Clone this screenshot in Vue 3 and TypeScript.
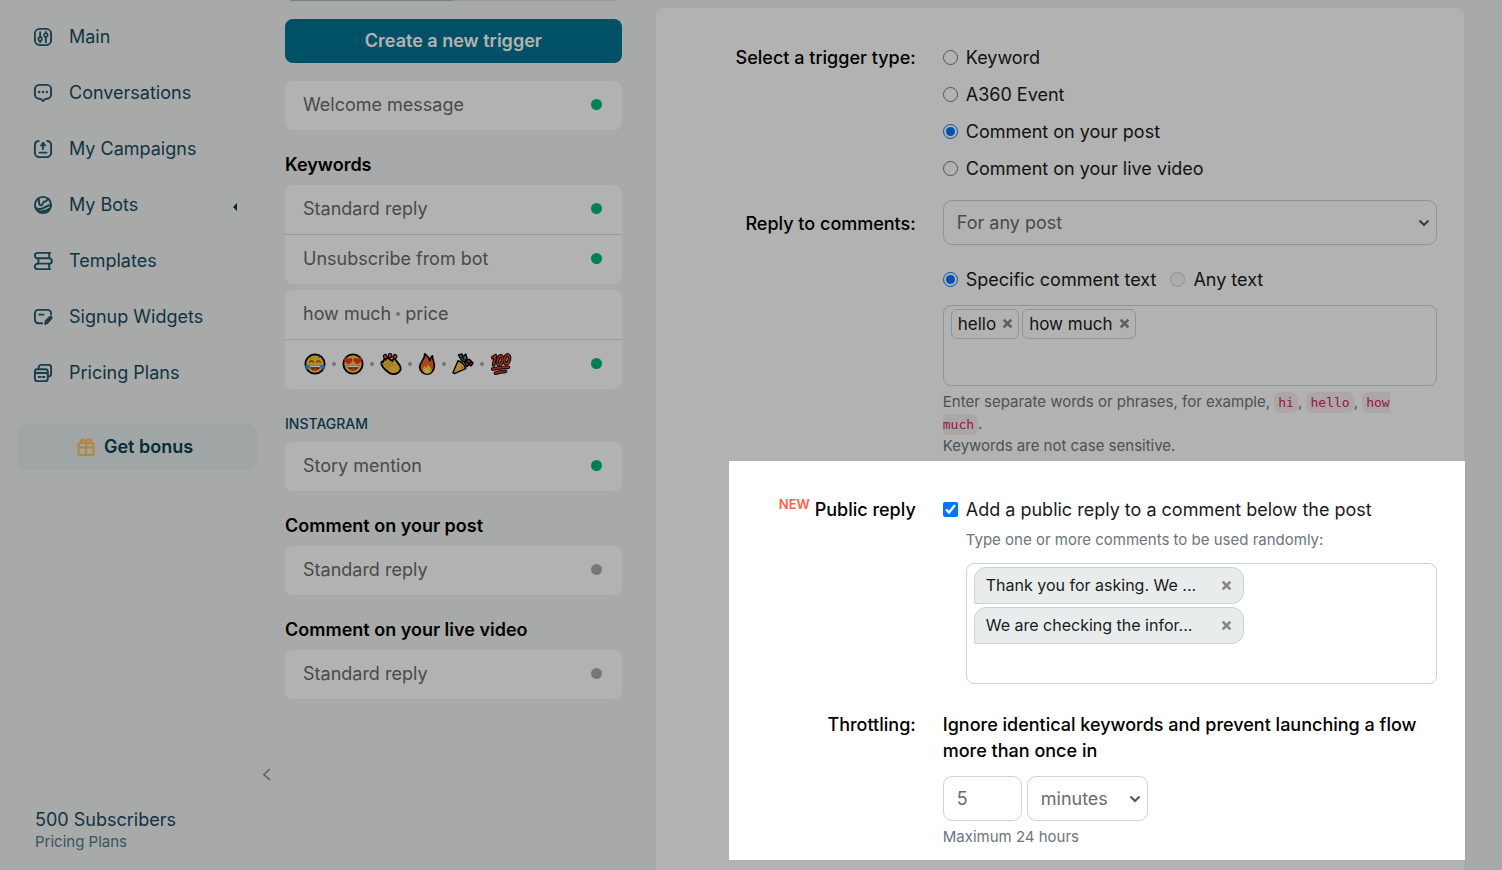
<script setup lang="ts">
import { ref } from 'vue'

interface Entry {
  words?: string[]
  emoji?: string[]
  status?: 'on' | 'off'
}

interface Group {
  title?: string
  caps?: boolean
  cards: Entry[][]
}

const nav = [
  { icon: 'main', label: 'Main' },
  { icon: 'chat', label: 'Conversations' },
  { icon: 'campaign', label: 'My Campaigns' },
  { icon: 'bots', label: 'My Bots', caret: true },
  { icon: 'templates', label: 'Templates' },
  { icon: 'widgets', label: 'Signup Widgets' },
  { icon: 'pricing', label: 'Pricing Plans' },
]

const groups: Group[] = [
  { cards: [[{ words: ['Welcome message'], status: 'on' }]] },
  {
    title: 'Keywords',
    cards: [
      [
        { words: ['Standard reply'], status: 'on' },
        { words: ['Unsubscribe from bot'], status: 'on' },
      ],
      [
        { words: ['how much', 'price'] },
        { emoji: ['joy', 'love', 'clap', 'fire', 'party', 'hundred'], status: 'on' },
      ],
    ],
  },
  { title: 'INSTAGRAM', caps: true, cards: [[{ words: ['Story mention'], status: 'on' }]] },
  { title: 'Comment on your post', cards: [[{ words: ['Standard reply'], status: 'off' }]] },
  { title: 'Comment on your live video', cards: [[{ words: ['Standard reply'], status: 'off' }]] },
]

const triggerTypes = ['Keyword', 'A360 Event', 'Comment on your post', 'Comment on your live video']
const triggerType = ref('Comment on your post')
const scope = ref('specific')
const keywords = ref(['hello', 'how much'])
const replies = ref(['Thank you for asking. We ...', 'We are checking the infor...'])
const publicReply = ref(true)
const interval = ref('5')
</script>

<template>
  <div class="page">
    <aside class="sidebar">
      <nav class="nav">
        <a v-for="item in nav" :key="item.label" href="#" class="nav-item">
          <svg class="nav-icon" viewBox="-0.5 -0.5 21 21" aria-hidden="true">
            <g v-if="item.icon === 'main'">
              <rect x="1.5" y="1.5" width="17" height="17" rx="5" />
              <path d="M7 5v5M7 14.2v1.3M13 4.6v1.2M13 10v5.4" />
              <circle cx="7" cy="12" r="1.9" />
              <circle cx="13" cy="8" r="1.9" />
            </g>
            <g v-else-if="item.icon === 'chat'">
              <path d="M6 1.5h8a4.5 4.5 0 0 1 4.5 4.5v5.5a4.5 4.5 0 0 1-4.3 4.5L12 16.4 10 18.5l-2-2.1-2.2-.4a4.5 4.5 0 0 1-4.3-4.5V6A4.5 4.5 0 0 1 6 1.5z" />
              <path class="thick" d="M6 9h.01M10 9h.01M14 9h.01" />
            </g>
            <g v-else-if="item.icon === 'campaign'">
              <path d="M5.5 1.6A4.5 4.5 0 0 0 1.5 6v8A4.5 4.5 0 0 0 6 18.5h8a4.5 4.5 0 0 0 4.5-4.5V6a4.5 4.5 0 0 0-4-4.4" />
              <path d="M10 10V4M6.2 13.8h7.6" />
              <path class="solid" d="M10 3L7.2 6.5h5.6z" />
            </g>
            <g v-else-if="item.icon === 'bots'">
              <circle class="ring" cx="10" cy="10" r="8.5" />
              <path d="M5.5 3.2L6 8.5c.2 2 2.5 2.6 3.3.8L10.500 7c.5-1 2-.3 2.700-1L15.500 3.500" />
              <path d="M1.8 12.5c2.500 2 6.500 1.800 9 .5 2.500-1.300 4.500-2.500 7.500-3M4.500 16.300c3.500.8 8 .3 12.500-2.500" />
            </g>
            <g v-else-if="item.icon === 'templates'">
              <path d="M17.500 1.500H4.300a2.800 2.800 0 0 0 0 5.600H17.500M16.500 1.500v5.600M4 7.200h12.500a2.800 2.800 0 0 1 0 5.600H4M4.500 7.200c1 1.800 1 3.800 0 5.600M17.500 18.500H4.300a2.800 2.800 0 0 1 0-5.700H17.500M16.500 12.800v5.700" />
            </g>
            <g v-else-if="item.icon === 'widgets'">
              <path d="M9 16.500H5A3.500 3.500 0 0 1 1.500 13V6A3.500 3.500 0 0 1 5 2.500h10A3.500 3.500 0 0 1 18.500 6v1.500M6 7.500h4.500" />
              <path d="M12.300 17.300l.5-3 4.300-4.300c1-1 2.500.5 1.500 1.600l-4.200 4.900z" />
              <path d="M13.500 14.800l3.500-3" />
            </g>
            <g v-else>
              <path d="M5.500 5.500V4A2.500 2.500 0 0 1 8 1.500h8A2.500 2.500 0 0 1 18.500 4v7a2.500 2.500 0 0 1-2.500 2.500h-.8" />
              <rect x="1.5" y="6" width="13.5" height="12.5" rx="2.5" />
              <path d="M1.500 10H15M5.500 14.200h2M9.800 14.200h1.700" />
            </g>
          </svg>
          <span>{{ item.label }}</span>
          <svg v-if="item.caret" class="caret" viewBox="0 0 4 8" aria-hidden="true"><path d="M4 0v8L0 4z" /></svg>
        </a>
      </nav>
      <button type="button" class="bonus">
        <svg viewBox="0 0 18 18" aria-hidden="true">
          <rect x="1.5" y="5" width="15" height="12" rx="1.5" />
          <path d="M1.500 9.500h15M9 5v12" />
          <path d="M9 5H4.500C3.300 5 3.200 1.500 5.700 1.500 7.700 1.500 9 3.200 9 5zM9 5h4.500c1.200 0 1.300-3.500-1.200-3.500C10.300 1.500 9 3.200 9 5z" />
        </svg>
        Get bonus
      </button>
      <div class="side-foot">
        <button type="button" class="collapse" aria-label="Collapse menu">
          <svg viewBox="0 0 8 12" aria-hidden="true"><path d="M7 1L1.500 6 7 11" /></svg>
        </button>
        <div class="subs">500 Subscribers</div>
        <a href="#" class="plan">Pricing Plans</a>
      </div>
    </aside>

    <main class="content">
      <section class="triggers">
        <div class="tab-line"></div>
        <button type="button" class="create">Create a new trigger</button>
        <div v-for="(group, g) in groups" :key="g" class="group">
          <h2 v-if="group.title" :class="['group-title', { caps: group.caps }]">{{ group.title }}</h2>
          <ul v-for="(card, c) in group.cards" :key="c" class="card">
            <li v-for="(entry, e) in card" :key="e" class="entry">
              <span v-if="entry.words" class="items">
                <template v-for="(word, i) in entry.words" :key="word">
                  <i v-if="i > 0" class="sep"></i>
                  <span>{{ word }}</span>
                </template>
              </span>
              <span v-else class="items">
                <template v-for="(name, i) in entry.emoji" :key="name">
                  <i v-if="i > 0" class="sep"></i>
                  <svg :class="['emoji', name]" :viewBox="name === 'fire' ? '2 0 20 24' : '0 0 24 24'" aria-hidden="true">
                    <g v-if="name === 'joy' || name === 'love'">
                      <circle cx="12" cy="12" r="10.5" fill="#ffc83d" stroke="#000" stroke-width="2" />
                      <path d="M6 13h12c0 8-12 8-12 0z" fill="#6d2632" />
                      <path d="M6.500 13.500h11v2h-11z" fill="#fff" />
                      <path d="M8.500 18c2-2 5-2 7 0-2 1.500-5 1.500-7 0z" fill="#f04a46" />
                      <template v-if="name === 'joy'">
                        <path d="M6 10.500c1-2.500 3.500-2.500 4.500 0M13.500 10.500c1-2.500 3.500-2.500 4.500 0" fill="none" stroke="#6d4a16" stroke-width="1.4" />
                        <path d="M6 5.500l2.500-.8M18 5.500l-2.500-.8" stroke="#d68b23" stroke-width="1.2" />
                        <path d="M2 12.500l4.500 1c0 5-4.500 5.500-5 2.500zM22 12.500l-4.500 1c0 5 4.500 5.500 5 2.500z" fill="#2aa5e8" />
                      </template>
                      <template v-else>
                        <path d="M7 12.500C1 9 1.500 4.500 4.500 4.500c1.500 0 2.400 1 2.500 2 .8-1.500 5-2 4.500 1.500-.3 1.500-2 3.500-4.500 4.500zM17 12.500c6-3.500 5.500-8 2.500-8-1.500 0-2.400 1-2.500 2-.8-1.500-5-2-4.500 1.500.3 1.500 2 3.500 4.500 4.500z" fill="#f23c31" />
                      </template>
                    </g>
                    <g v-else-if="name === 'clap'" stroke-linejoin="round" stroke-linecap="round">
                      <path d="M6 4.500L5.500 3.500M11 3.500V2.500M16 4.500l.5-1" fill="none" stroke="#000" stroke-width="5" />
                      <path d="M1.500 11.500c-.3-1.800 1.200-2.500 2.200-2-.4-1.800 1.200-3 2.600-2.200 0-1.600 1.700-2.400 3-1.400l4.500 2.900c-.3-2.400 2-3.200 3.400-1.200l4.300 5.900c2 3.500.8 7-2.500 8.500-3.500 1.700-7 1-9.500-.8-3.500-2.600-7.600-6.500-8-9.700z" fill="#ffc83d" stroke="#000" stroke-width="2" />
                      <path d="M6 4.500L5.500 3.500M11 3.500V2.500M16 4.500l.5-1" fill="none" stroke="#f04a28" stroke-width="2.6" />
                      <path d="M4.500 11.500l5 5M7 9.500l5 5M10 8.500l4 4" fill="none" stroke="#b87a20" />
                    </g>
                    <g v-else-if="name === 'fire'">
                      <path d="M9.500 1c3 2 5 4.500 5.500 7.500 1-1.500.5-4 3-5.500-.5 4 2.500 6 2 12-.4 5-4 8-8 8s-8-3-8-8 6-8 5.500-14z" fill="#f8612d" stroke="#000" stroke-width="1.8" stroke-linejoin="round" />
                      <path d="M9 14c1 .5 1.500 1.500 1.500 2.500 1-.8 1.500-2.500 3-4 .3 2 3.500 3.500 3.500 6.500 0 2-2 3.500-4.500 3.500S7.500 21 7.500 18.500 9 16 9 14z" fill="#ffd92f" />
                      <path d="M11.500 17l2 3.500-3 1.500z" fill="#fff" />
                    </g>
                    <g v-else-if="name === 'party'" stroke="#000" stroke-width="1.5" stroke-linejoin="round">
                      <path d="M7 2l4-1 1 3 3-3 1.500 5-3 4-3-2zM10.500 4l3 3" fill="#2a91b8" />
                      <path d="M14 11c2-4 5-5 6-3l3 3-2 3-3-1-2 2z" fill="#b92b22" />
                      <path d="M6.500 8.500c4 1 7 4 8.500 8.500L2.500 22.500 1 21.500z" fill="#ffc83d" />
                      <path d="M10 15.500h1.500v1.500" fill="none" stroke="#2aa5e8" stroke-width="1.2" />
                      <path d="M16 10l3 1.500 2-1.500" fill="none" />
                    </g>
                    <g v-else fill="none" stroke-linecap="round" stroke-linejoin="round">
                      <g stroke="#000" stroke-width="4">
                        <path d="M3 5l3-2-2 10" />
                        <ellipse cx="11" cy="8" rx="2.6" ry="5" transform="rotate(12 11 8)" />
                        <ellipse cx="18.5" cy="7" rx="2.6" ry="5" transform="rotate(12 18.5 7)" />
                        <path d="M3 17.500c6-1 11-2 17-2M6 22c4-1.500 7-2 11-2" />
                      </g>
                      <g stroke="#e03c20" stroke-width="1.9">
                        <path d="M3 5l3-2-2 10" />
                        <ellipse cx="11" cy="8" rx="2.6" ry="5" transform="rotate(12 11 8)" />
                        <ellipse cx="18.5" cy="7" rx="2.6" ry="5" transform="rotate(12 18.5 7)" />
                        <path d="M3 17.500c6-1 11-2 17-2M6 22c4-1.500 7-2 11-2" />
                      </g>
                    </g>
                  </svg>
                </template>
              </span>
              <span v-if="entry.status" :class="['dot', entry.status]"></span>
            </li>
          </ul>
        </div>
      </section>

      <form class="panel" @submit.prevent>
        <div class="row">
          <div class="label" id="type-label">Select a trigger type:</div>
          <div class="options" role="radiogroup" aria-labelledby="type-label">
            <label v-for="type in triggerTypes" :key="type" class="choice">
              <input v-model="triggerType" type="radio" name="type" :value="type" />{{ type }}
            </label>
          </div>
        </div>

        <div class="row reply-row">
          <label class="label select-label" for="post">Reply to comments:</label>
          <div>
            <select id="post" class="control wide"><option>For any post</option></select>
            <div class="scope">
              <label class="choice"><input v-model="scope" type="radio" name="scope" value="specific" />Specific comment text</label>
              <label class="choice"><input v-model="scope" type="radio" name="scope" value="any" disabled />Any text</label>
            </div>
            <div class="tagbox">
              <span v-for="(word, i) in keywords" :key="word" class="tag">
                {{ word }}
                <button type="button" class="remove" :aria-label="`Remove ${word}`" @click="keywords.splice(i, 1)">
                  <svg viewBox="0 0 10 10" aria-hidden="true"><path d="M1.500 1.500l7 7M8.500 1.500l-7 7" /></svg>
                </button>
              </span>
              <input class="entry-input" type="text" aria-label="Comment text" />
            </div>
            <p class="hint">
              Enter separate words or phrases, for example, <code>hi</code>, <code>hello</code>, <code>how much</code>.<br />Keywords are not case sensitive.
            </p>
          </div>
        </div>

        <div class="spotlight">
          <div class="row">
            <div class="label"><sup class="new">NEW</sup> Public reply</div>
            <div>
              <label class="choice"><input v-model="publicReply" type="checkbox" />Add a public reply to a comment below the post</label>
              <div class="indent">
                <label class="hint" for="reply-input">Type one or more comments to be used randomly:</label>
                <div class="tagbox replies">
                  <span v-for="(reply, i) in replies" :key="reply" class="bubble">
                    {{ reply }}
                    <button type="button" class="remove" aria-label="Remove reply" @click="replies.splice(i, 1)">
                      <svg viewBox="0 0 10 10" aria-hidden="true"><path d="M1.500 1.500l7 7M8.500 1.500l-7 7" /></svg>
                    </button>
                  </span>
                  <input id="reply-input" class="entry-input" type="text" />
                </div>
              </div>
            </div>
          </div>
          <div class="row throttle">
            <div class="label">Throttling:</div>
            <div>
              <label class="strong" for="interval">Ignore identical keywords and prevent launching a flow more than once in</label>
              <div class="interval">
                <input id="interval" v-model="interval" class="control number" type="text" />
                <select class="control unit" aria-label="Unit"><option>minutes</option></select>
              </div>
              <div class="hint">Maximum 24 hours</div>
            </div>
          </div>
        </div>
      </form>
    </main>
  </div>
</template>

<style>
body {
  margin: 0;
  background: #f1f4f3;
}
</style>

<style scoped>
.page {
  display: grid;
  grid-template-columns: 285px 1fr;
  height: 100vh;
  overflow: hidden;
  background: #f1f4f3;
  color: #1a1a1a;
  font: 400 18px/26px Inter, 'Liberation Sans', sans-serif;
}
.page *,
.page {
  box-sizing: border-box;
}
button,
input,
select {
  font: inherit;
}
a {
  text-decoration: none;
}
.sidebar {
  display: flex;
  flex-direction: column;
  padding: 9px 0 19px;
  color: #174a5e;
}
.nav-item {
  display: flex;
  align-items: center;
  height: 56px;
  padding: 0 48px 0 33px;
  gap: 16px;
  color: inherit;
}
.nav-icon {
  width: 20px;
  height: 20px;
  fill: none;
  stroke: #24586b;
  stroke-width: 2;
  stroke-linecap: round;
  stroke-linejoin: round;
}
.nav-icon circle {
  stroke-width: 1.7;
}
.nav-icon .ring {
  stroke-width: 2;
}
.nav-icon .thick {
  stroke-width: 2.6;
}
.nav-icon .solid {
  fill: #24586b;
  stroke-width: 1;
}
.caret {
  width: 4px;
  height: 8px;
  margin: 4px 0 0 auto;
  fill: #003d52;
}
.bonus {
  display: flex;
  align-items: center;
  justify-content: center;
  gap: 9px;
  height: 46px;
  margin: 23px 28px 0 17px;
  padding: 0 4px 1px 0;
  border: 0;
  border-radius: 9px;
  background: #e5eded;
  color: #073f52;
  font-weight: 600;
}
.bonus svg {
  width: 18px;
  height: 18px;
  fill: none;
  stroke: #ffbf61;
  stroke-width: 2;
  stroke-linejoin: round;
}
.side-foot {
  display: flex;
  flex-direction: column;
  margin-top: auto;
  padding-left: 35px;
}
.collapse {
  align-self: flex-end;
  display: flex;
  margin: 0 14px 26px 0;
  padding: 0;
  border: 0;
  background: none;
}
.collapse svg {
  width: 9px;
  height: 13px;
  fill: none;
  stroke: #888;
  stroke-width: 1.4;
}
.plan {
  color: #52788a;
  font-size: 15px;
  line-height: 18px;
}
.content {
  display: grid;
  grid-template-columns: 5fr 12fr;
  gap: 34px;
  padding-right: 38px;
}
.tab-line {
  height: 1px;
  margin: 0 5px 18px;
  background: linear-gradient(to right, #a9bbc4 50%, #d9dedf 50%);
}
.create {
  width: 100%;
  height: 44px;
  padding: 0;
  border: 0;
  border-radius: 8px;
  background: #007491;
  color: #fff;
  font-weight: 600;
}
.group {
  margin-top: 18px;
}
.group-title {
  margin: 0;
  padding: 4px 0 7px;
  color: #000;
  font-size: 18px;
  font-weight: 600;
  line-height: 26px;
}
.group-title.caps {
  padding: 4px 0 5px;
  color: #0d4b60;
  font-size: 14px;
  font-weight: 500;
}
.card {
  margin: 0 0 6px;
  padding: 0;
  border-radius: 8px;
  background: #fff;
  list-style: none;
}
.card:last-child {
  margin-bottom: 0;
}
.entry {
  display: flex;
  align-items: center;
  justify-content: space-between;
  height: 49px;
  padding: 0 20px 2px 18px;
  color: #6b6b6b;
}
.entry + .entry {
  height: 50px;
  border-top: 1px solid #d8dcdd;
}
.dot {
  width: 11px;
  height: 11px;
  margin-bottom: 1px;
  border-radius: 50%;
}
.dot.on {
  background: #00b67b;
}
.dot.off {
  background: #adadad;
}
.items {
  display: flex;
  align-items: center;
}
.emoji {
  width: 24px;
  height: 22px;
}
.emoji.fire {
  width: 20px;
}
.sep {
  width: 4px;
  height: 4px;
  margin: 0 5px;
  border-radius: 50%;
  background: #99a9b1;
}
.panel {
  margin-top: 8px;
  padding-top: 31px;
  border-radius: 9px 9px 0 0;
  background: #fff;
}
.row {
  display: grid;
  grid-template-columns: 260px 1fr;
  gap: 27px;
  padding-right: 27px;
}
.label,
.strong {
  color: #000;
  font-weight: 500;
}
.label {
  padding-top: 6px;
  text-align: right;
}
.strong {
  display: block;
}
.choice {
  display: flex;
  align-items: center;
  gap: 8px;
  height: 37px;
}
.choice input {
  width: 15px;
  height: 15px;
  margin: 0;
}
.reply-row {
  margin-top: 13px;
}
.select-label {
  padding-top: 11px;
}
.control {
  height: 45px;
  padding: 0 13px;
  border: 1px solid #ccd3d3;
  border-radius: 9px;
  background: #fff;
  color: #6b6b6b;
}
select.control {
  appearance: none;
  background: #fff url("data:image/svg+xml,%3Csvg xmlns='http://www.w3.org/2000/svg' width='12' height='8' fill='none' stroke='%23555' stroke-width='2'%3E%3Cpath d='M1.5 1.5l4.5 4.5 4.5-4.5'/%3E%3C/svg%3E") no-repeat right 6px center;
}
.wide {
  display: block;
  width: 100%;
}
.scope {
  display: flex;
  gap: 14px;
  margin: 16px 0 7px;
}
.tagbox {
  display: flex;
  flex-wrap: wrap;
  align-content: flex-start;
  gap: 3px;
  min-height: 81px;
  padding: 3px 7px;
  border: 1px solid #ccd3d3;
  border-radius: 8px;
}
.tag {
  display: flex;
  align-items: center;
  gap: 6px;
  height: 30px;
  padding: 0 5px 1px 6px;
  border: 1px solid #ccd3d3;
  border-radius: 6px;
  font-size: 17px;
}
.remove {
  display: flex;
  padding: 0;
  border: 0;
  background: none;
}
.remove svg {
  width: 11px;
  height: 11px;
  stroke: #888;
  stroke-width: 2.5;
}
.entry-input {
  flex: 1;
  min-width: 40px;
  height: 30px;
  padding: 0;
  border: 0;
  outline: 0;
  background: none;
}
.hint {
  display: block;
  margin: 0;
  color: #6c757d;
  font-size: 15px;
  line-height: 22px;
}
p.hint {
  margin: 5px 0 4px;
}
code {
  padding: 3px 4px;
  border-radius: 7px;
  background: #f6eef0;
  color: #d6245f;
  font: 13px/21px 'DejaVu Sans Mono', monospace;
}
.spotlight {
  position: relative;
  z-index: 1;
  margin: 0 -1px 0 73px;
  padding: 30px 1px 12px 0;
  background: #fff;
  box-shadow: 0 0 0 3000px rgba(0, 0, 0, 0.3);
}
.spotlight .row {
  grid-template-columns: 187px 1fr;
}
.new {
  color: #ff6047;
  font-size: 13px;
  font-weight: 600;
  line-height: 0;
}
.indent {
  padding: 1px 0 0 23px;
}
.replies {
  flex-direction: column;
  flex-wrap: nowrap;
  min-height: 121px;
  margin-top: 12px;
}
.bubble {
  display: flex;
  align-items: center;
  justify-content: space-between;
  width: 270px;
  height: 37px;
  padding: 0 11px 1px;
  border: 1px solid #ccd3d3;
  border-radius: 12px 12px 12px 0;
  background: #e8ecec;
  font-size: 16px;
}
.throttle {
  margin-top: 28px;
}
.throttle .label {
  padding-top: 0;
}
.interval {
  display: flex;
  gap: 5px;
  margin: 12px 0 5px;
}
.number {
  width: 79px;
}
.unit {
  width: 121px;
}
</style>
